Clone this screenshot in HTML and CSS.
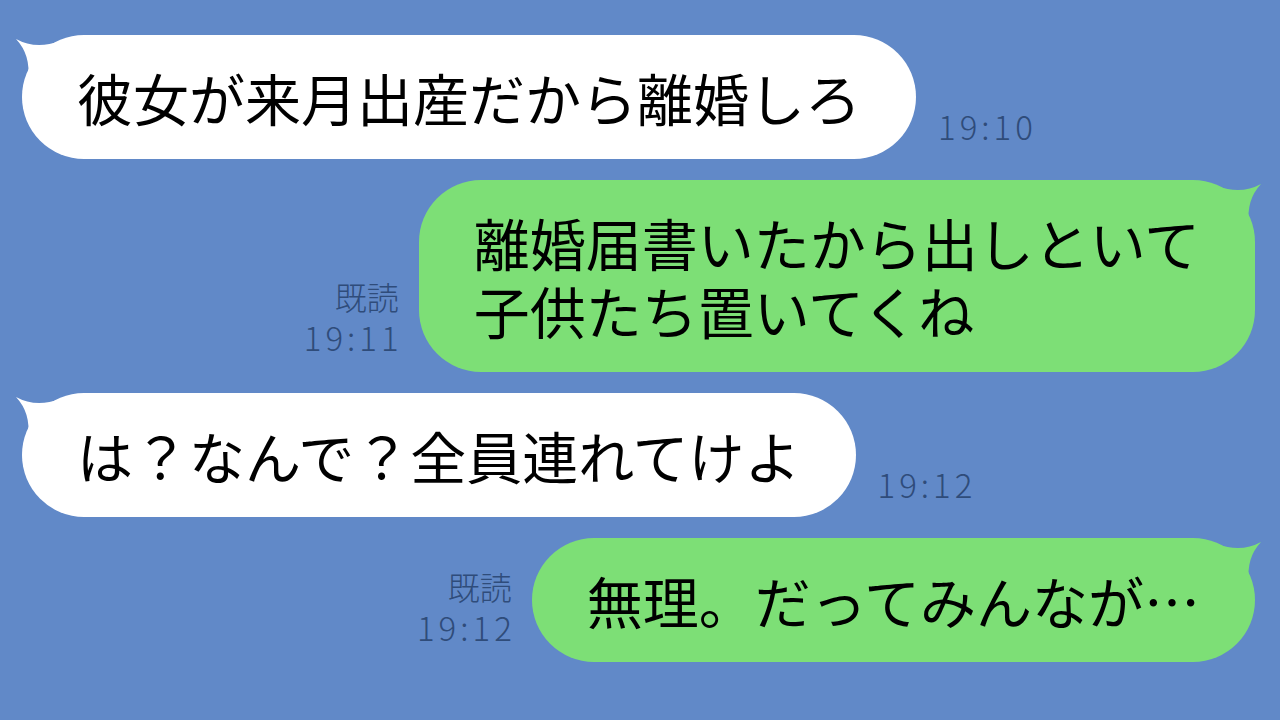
FILE: index.html
```html
<!DOCTYPE html>
<html lang="ja">
  <head>
    <meta charset="UTF-8" />
    <meta name="viewport" content="width=device-width, initial-scale=1.0" />
    <title>トーク</title>
    <link rel="stylesheet" href="styles.css">
  </head>

  <body>
    <div id="talk">
      <!-- 相手 -->
      <div class="row left">
        <div class="bubble white">
          <svg class="tail" viewBox="0 0 50 50"><path d="M46 6 Q22 15 2 4 Q17 20 14 44 L46 44 Z"/></svg>
          彼女が来月出産だから離婚しろ
        </div>
        <div class="time">19:10</div>
      </div>

      <!-- 自分 -->
      <div class="row right">
        <div class="meta">
          <span class="read">既読</span>
          <span class="time">19:11</span>
        </div>
        <div class="bubble green">
          <svg class="tail" viewBox="0 0 50 50"><path d="M46 6 Q22 15 2 4 Q17 20 14 44 L46 44 Z"/></svg>
          <span class="line">離婚届書いたから出しといて</span>
          <span class="line">子供たち置いてくね</span>
        </div>
      </div>

      <div class="row left">
        <div class="bubble white">
          <svg class="tail" viewBox="0 0 50 50"><path d="M46 6 Q22 15 2 4 Q17 20 14 44 L46 44 Z"/></svg>
          は？なんで？全員連れてけよ
        </div>
        <div class="time">19:12</div>
      </div>

      <div class="row right">
        <div class="meta">
          <span class="read">既読</span>
          <span class="time">19:12</span>
        </div>
        <div class="bubble green">
          <svg class="tail" viewBox="0 0 50 50"><path d="M46 6 Q22 15 2 4 Q17 20 14 44 L46 44 Z"/></svg>
          無理。だってみんなが…
        </div>
      </div>
    </div>
  </body>
</html>
```

FILE: styles.css
```css
html, body{
  margin: 0;
  padding: 0;
}

body{
  width: 1280px;
  height: 720px;
  overflow: hidden;
  background-color: #6189c8;
  font-family: "Noto Sans CJK JP", "Noto Sans", sans-serif;
}

/* 縦並び */
#talk{
  display: flex;
  flex-direction: column;
  gap: 21px;
  padding-top: 35px;
}

.row{
  display: flex;
  align-items: flex-end;
}

.row.left{
  padding-left: 22px;
}

.row.right{
  justify-content: flex-end;
  padding-right: 25px;
}

/* 吹き出し */
.bubble{
  position: relative;
  padding: 28px 55px;
  border-radius: 62px;
  font-size: 56px;
  line-height: 68px;
  color: #000;
  white-space: nowrap;
}

.bubble .line{
  display: block;
}

.bubble.white{
  background-color: #fff;
}

.bubble.green{
  background-color: #7ddf76;
}

/* しっぽ */
.tail{
  position: absolute;
  top: 0;
  width: 50px;
  height: 50px;
}

.white .tail{
  left: -8px;
  fill: #fff;
}

.green .tail{
  right: -8px;
  fill: #7ddf76;
  transform: scaleX(-1);
}

/* 時刻・既読 */
.time, .meta{
  font-size: 33px;
  font-weight: 300;
  line-height: 40px;
  color: #2f4c7a;
}

.time{
  letter-spacing: 4px;
}

.row.left > .time{
  margin: 0 0 13px 22px;
}

.meta{
  display: flex;
  flex-direction: column;
  align-items: flex-end;
  margin: 0 20px 15px 0;
}

.meta .time{
  margin-right: -4px;
}

.read{
  font-size: 32px;
  line-height: 38px;
  margin-bottom: 2px;
}
```
